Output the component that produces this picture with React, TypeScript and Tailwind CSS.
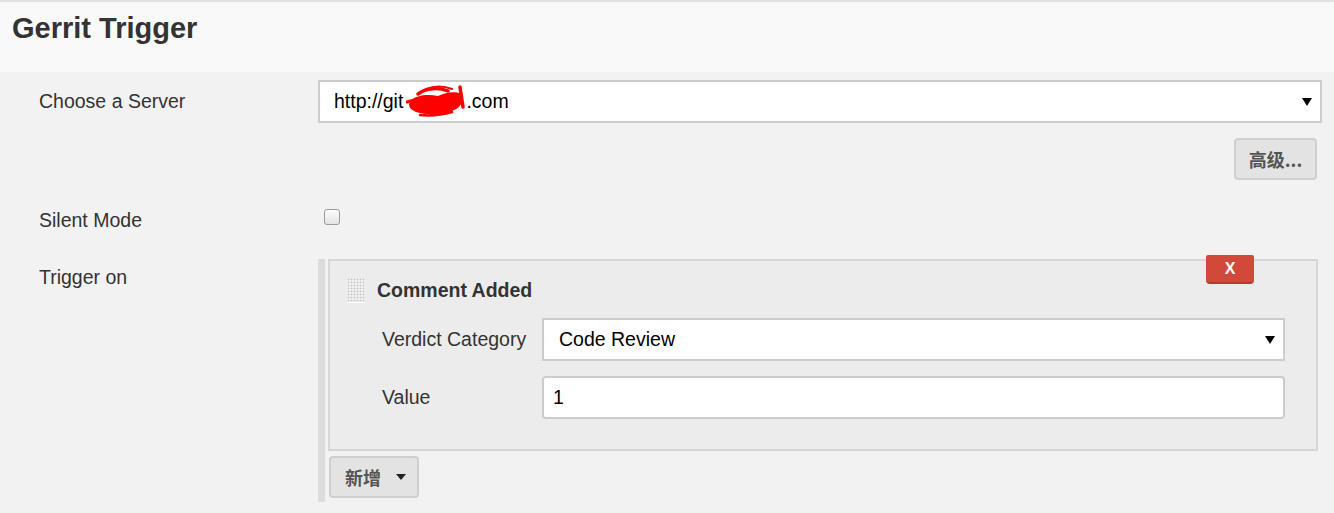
import React from "react";

const Arrow = () => (
  <svg width="10" height="8" viewBox="0 0 10 8" className="shrink-0">
    <polygon points="0,0 10,0 5,8" fill="#000" />
  </svg>
);

const Handle = () => {
  const dots: React.ReactElement[] = [];
  for (let r = 0; r < 8; r++) {
    for (let c = 0; c < 6; c++) {
      dots.push(
        <rect key={`${r}-${c}`} x={c * 3 + 0.5} y={r * 3 + 0.5} width="2" height="2" fill="#c4c4c4" />
      );
    }
  }
  return (
    <svg width="18" height="25" viewBox="0 0 18 25" className="shrink-0">
      <rect x="0" y="0" width="18" height="25" fill="#ffffff" />
      {dots}
    </svg>
  );
};

const Scribble = () => (
  <svg width="60" height="32" viewBox="0 0 60 32" className="absolute left-[3px] top-[-6px]">
    <path
      d="M4 16 C10 10, 22 9, 32 11 C40 7, 50 6, 56 9 C58 14, 56 22, 48 25 C38 30, 22 31, 10 27 C3 24, 2 20, 4 16 Z"
      fill="#ff0000"
    />
    <path d="M12 9 C20 3, 32 2, 42 6" stroke="#ff0000" strokeWidth="3.5" fill="none" strokeLinecap="round" />
    <path d="M54 2 L57 22" stroke="#ff0000" strokeWidth="3.5" fill="none" strokeLinecap="round" />
    <path d="M1 17 C8 14, 16 15, 24 18" stroke="#ff0000" strokeWidth="3" fill="none" strokeLinecap="round" />
    <path d="M14 30 C24 31, 36 30, 46 27" stroke="#ff0000" strokeWidth="2.5" fill="none" strokeLinecap="round" />
    <path d="M20 4 C28 1, 38 1, 46 4" stroke="#ff0000" strokeWidth="2" fill="none" strokeLinecap="round" />
  </svg>
);

export default function App() {
  return (
    <div className="w-full min-h-[513px] bg-[#f2f2f2] font-['Liberation_Sans','Noto_Sans_CJK_SC',sans-serif] text-[#333] border-t-[2px] border-[#e2e2e2]">
      <div className="h-[70px] bg-[#f9f9f9] pl-[12px] pt-[12px]">
        <h1 className="text-[29px] leading-[29px] font-bold text-[#333]">Gerrit Trigger</h1>
      </div>

      <div className="pt-[8px] pr-[12px]">
        {/* Row 1 */}
        <div className="flex h-[43px] items-center">
          <div className="w-[318px] pl-[39px] text-[19.5px]">Choose a Server</div>
          <div className="flex-1 h-[43px] bg-white border-[2px] border-[#cccccc] flex items-center pl-[14px] pr-[8px] text-[19.5px] text-black">
            <span className="flex-1 flex items-center">
              <span>http://git</span>
              <span className="relative inline-block w-[63px] h-[22px]">
                <Scribble />
              </span>
              <span>.com</span>
            </span>
            <Arrow />
          </div>
        </div>

        {/* Row 2 */}
        <div className="flex justify-end mt-[15px] pr-[5px]">
          <button className="w-[83px] h-[42px] rounded-[4px] border-[2px] border-[#cfcfcf] bg-[#e3e3e3] text-[#555] font-bold text-[18px] font-['Noto_Sans_CJK_SC',sans-serif] flex items-center justify-center">
            高级...
          </button>
        </div>

        {/* Row 3 */}
        <div className="flex h-[40px] mt-[20px]">
          <div className="w-[318px] pl-[39px] text-[19.5px] leading-[40px]">Silent Mode</div>
          <div className="pl-[6px] pt-[9px]">
            <div className="w-[16px] h-[16px] rounded-[3px] border border-[#9a9a9a] bg-gradient-to-b from-[#fdfdfd] to-[#e4e4e4]" />
          </div>
        </div>

        {/* Row 4 */}
        <div className="flex mt-[19px]">
          <div className="w-[318px] pl-[39px] text-[19.5px] leading-[36px]">Trigger on</div>
          <div className="flex-1 flex pr-[4px]">
            <div className="w-[7px] bg-[#dcdcdc] shrink-0" />
            <div className="flex-1 pl-[3px] pb-[4px]">
              <div className="relative border-[2px] border-[#d6d6d6] bg-[#ececec] pt-[17px] pl-[17px] pr-[31px] pb-[30px]">
                <button className="absolute top-[-6px] right-[62px] w-[48px] h-[29px] bg-[#d24939] border-b-[2px] border-[#b63b2d] rounded-b-[4px] rounded-t-[2px] text-white font-bold text-[16px] leading-[27px] text-center">
                  X
                </button>
                <div className="flex items-center h-[25px]">
                  <Handle />
                  <span className="ml-[12px] text-[19.5px] font-bold text-[#333]">Comment Added</span>
                </div>
                <div className="flex items-center h-[43px] mt-[15px]">
                  <div className="w-[195px] pl-[35px] text-[19.5px]">Verdict Category</div>
                  <div className="flex-1 h-[43px] bg-white border-[2px] border-[#cccccc] flex items-center pl-[15px] pr-[8px] text-[19.5px] text-black">
                    <span className="flex-1">Code Review</span>
                    <Arrow />
                  </div>
                </div>
                <div className="flex items-center h-[43px] mt-[15px]">
                  <div className="w-[195px] pl-[35px] text-[19.5px]">Value</div>
                  <div className="flex-1 h-[43px] bg-white border-[2px] border-[#cccccc] rounded-[4px] flex items-center pl-[9px] text-[19.5px] text-black">
                    1
                  </div>
                </div>
              </div>
              <button className="mt-[5px] ml-[1px] w-[90px] h-[42px] rounded-[4px] border-[2px] border-[#cfcfcf] bg-[#e3e3e3] text-[#555] font-bold text-[18px] font-['Noto_Sans_CJK_SC',sans-serif] flex items-center pl-[14px]">
                <span>新增</span>
                <svg width="10" height="6" viewBox="0 0 10 6" className="ml-[15px]">
                  <polygon points="0,0 10,0 5,6" fill="#222" />
                </svg>
              </button>
            </div>
          </div>
        </div>
      </div>
    </div>
  );
}
